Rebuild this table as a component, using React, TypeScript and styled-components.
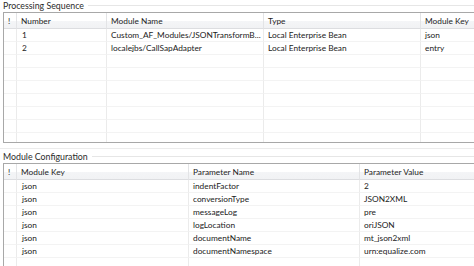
import React from 'react';
import styled, { createGlobalStyle } from 'styled-components';

const GlobalStyle = createGlobalStyle`
  html, body {
    margin: 0;
    padding: 0;
    background: #ffffff;
    overflow: hidden;
  }
  body {
    font-family: Lato, 'Open Sans', sans-serif;
    font-size: 8.3px;
    color: #222222;
  }
`;

const Page = styled.div`
  width: 474px;
  height: 266px;
  overflow: hidden;
  display: flex;
  flex-direction: column;
`;

const Section = styled.section<{ $top: number }>`
  display: flex;
  flex-direction: column;
  margin-top: ${(p) => p.$top}px;
`;

const TitleRow = styled.div<{ $rule?: boolean }>`
  display: flex;
  align-items: center;
  gap: 4px;
  height: 14px;
  padding-left: 3px;
  border-top: ${(p) => (p.$rule ? '1px solid #ececec' : 'none')};
`;

const Title = styled.span`
  color: #2b2b2b;
  font-size: 8.8px;
  white-space: nowrap;
`;

const TitleLine = styled.span`
  flex: 1;
  height: 1px;
  background: #e6e6e6;
`;

const Table = styled.div<{ $cols: string; $bodyHeight: number }>`
  margin-left: 3px;
  width: 520px;
  border: 1px solid #a8a8a8;
  border-right: none;
  display: grid;
  grid-template-columns: ${(p) => p.$cols};
  grid-auto-rows: 13px;
  grid-template-rows: 16px;
  max-height: ${(p) => p.$bodyHeight + 16}px;
  overflow: hidden;
`;

const HeadCell = styled.div`
  display: flex;
  align-items: center;
  padding-left: 4px;
  white-space: nowrap;
  overflow: hidden;
  background: linear-gradient(#ffffff 0%, #ffffff 50%, #f4f5f7 51%, #f1f2f4 100%);
  border-right: 1px solid #e3e4e6;
  border-bottom: 1px solid #dcdde0;
  color: #1e1e1e;
`;

const Cell = styled.div<{ $pad?: number }>`
  display: flex;
  align-items: center;
  padding-left: ${(p) => p.$pad ?? 4}px;
  white-space: nowrap;
  overflow: hidden;
  border-right: 1px solid #ebebeb;
  border-bottom: 1px solid #f3f3f3;
  color: #222222;
`;

type TableProps = {
  cols: string;
  headers: string[];
  rows: string[][];
  total: number;
  bodyHeight: number;
};

const DataTable = ({ cols, headers, rows, total, bodyHeight }: TableProps) => {
  const filled = [...rows];
  while (filled.length < total) filled.push(headers.map(() => ''));
  return (
    <Table $cols={cols} $bodyHeight={bodyHeight}>
      {headers.map((h, i) => (
        <HeadCell key={'h' + i}>{h}</HeadCell>
      ))}
      {filled.map((row, r) =>
        row.map((v, c) => (
          <Cell key={r + '-' + c} $pad={c === 1 ? 5 : 4}>
            {v}
          </Cell>
        ))
      )}
    </Table>
  );
};

const sequence = [
  ['', '1', 'Custom_AF_Modules/JSONTransformB...', 'Local Enterprise Bean', 'json'],
  ['', '2', 'localejbs/CallSapAdapter', 'Local Enterprise Bean', 'entry'],
];

const config = [
  ['', 'json', 'indentFactor', '2'],
  ['', 'json', 'conversionType', 'JSON2XML'],
  ['', 'json', 'messageLog', 'pre'],
  ['', 'json', 'logLocation', 'oriJSON'],
  ['', 'json', 'documentName', 'mt_json2xml'],
  ['', 'json', 'documentNamespace', 'urn:equalize.com'],
];

const App = () => (
  <Page>
    <GlobalStyle />
    <Section $top={-2}>
      <TitleRow>
        <Title>Processing Sequence</Title>
        <TitleLine />
      </TitleRow>
      <DataTable
        cols="13px 90px 157px 157px 103px"
        headers={['!', 'Number', 'Module Name', 'Type', 'Module Key']}
        rows={sequence}
        total={9}
        bodyHeight={113}
      />
    </Section>
    <Section $top={5}>
      <TitleRow $rule>
        <Title>Module Configuration</Title>
        <TitleLine />
      </TitleRow>
      <DataTable
        cols="13px 172px 171px 164px"
        headers={['!', 'Module Key', 'Parameter Name', 'Parameter Value']}
        rows={config}
        total={7}
        bodyHeight={91}
      />
    </Section>
  </Page>
);

export default App;
